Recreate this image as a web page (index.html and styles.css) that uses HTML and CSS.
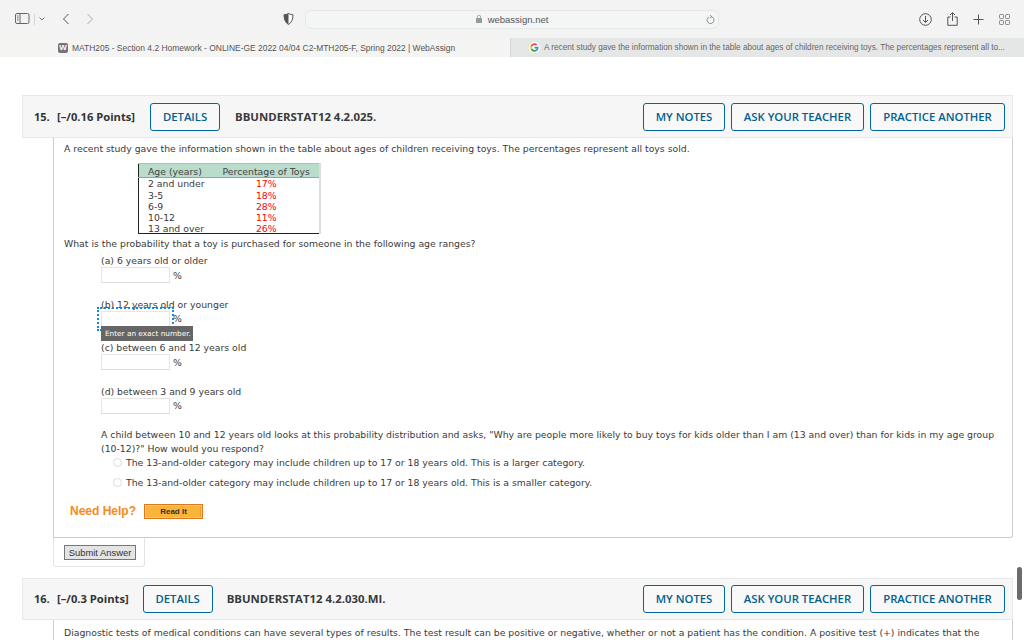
FILE: index.html
```html
<!DOCTYPE html>
<html lang="en">
<head>
<meta charset="utf-8">
<title>WebAssign</title>
<link rel="stylesheet" href="styles.css">
</head>
<body>
<div class="toolbar">
  <div class="tb-left">
    <svg class="ic-side" width="15" height="12" viewBox="0 0 15 12"><rect x=".5" y=".5" width="13.500" height="10" rx="1.500" fill="none" stroke="#666"/><path d="M5 .5v10M2 3h1.500M2 5h1.500M2 7h1.500" stroke="#666" fill="none"/></svg>
    <span class="tb-sep"></span>
    <svg class="ic-chev" width="6" height="4" viewBox="0 0 6 4"><path d="M.5.5 3 3 5.500.5" fill="none" stroke="#777"/></svg>
    <svg class="ic-back" width="8" height="12" viewBox="0 0 8 12"><path d="M6.500 1 1.500 6l5 5" fill="none" stroke="#555"/></svg>
    <svg class="ic-fwd" width="8" height="12" viewBox="0 0 8 12"><path d="M1.500 1l5 5-5 5" fill="none" stroke="#aaa"/></svg>
  </div>
  <svg class="ic-shield" width="11" height="12" viewBox="0 0 11 12"><path d="M5.500.5C7 1.300 8.500 1.700 10 1.800c0 4.500-1.500 8-4.500 9.700C2.500 9.800 1 6.300 1 1.800 2.500 1.700 4 1.300 5.500.5z" fill="#fff" stroke="#555"/><path d="M5.500.5C4 1.300 2.500 1.700 1 1.800c0 4.500 1.500 8 4.500 9.700z" fill="#555"/></svg>
  <div class="urlbar">
    <span class="url-mid">
      <svg width="6" height="8" viewBox="0 0 6 8"><rect y="3" width="6" height="5" rx=".8" fill="#999"/><path d="M1.300 3.500V2a1.700 1.700 0 0 1 3.400 0v1.500" fill="none" stroke="#999" stroke-width=".8"/></svg>
      <span>webassign.net</span>
    </span>
    <svg class="ic-reload" width="9" height="10" viewBox="0 0 9 10"><path d="M5.500 1.700a3.500 3.500 0 1 1-2.500.2" fill="none" stroke="#777" stroke-width=".8"/><path d="M3.800 0l2 1.700-2 1.300" fill="none" stroke="#777" stroke-width=".8"/></svg>
  </div>
  <div class="tb-right">
    <svg width="13" height="13" viewBox="0 0 13 13"><circle cx="6.500" cy="6.500" r="5.800" fill="none" stroke="#555"/><path d="M6.500 3v6.500M4 7l2.500 2.500L9 7" fill="none" stroke="#555"/></svg>
    <svg width="11" height="14" viewBox="0 0 11 14"><path d="M3.500 5H.8v8.300h9.400V5H7.500M5.500 9V.8M3 3l2.500-2.300L8 3" fill="none" stroke="#555"/></svg>
    <svg width="11" height="11" viewBox="0 0 11 11"><path d="M5.500.5v10M.5 5.500h10" stroke="#555" fill="none"/></svg>
    <svg width="11" height="11" viewBox="0 0 11 11"><g fill="none" stroke="#888"><rect x=".5" y=".5" width="4" height="4" rx=".8"/><rect x="6.500" y=".5" width="4" height="4" rx=".8"/><rect x=".5" y="6.500" width="4" height="4" rx=".8"/><rect x="6.500" y="6.500" width="4" height="4" rx=".8"/></g></svg>
  </div>
</div>
<div class="tabs">
  <div class="tab tab-a">
    <span class="fav-w">W</span>
    <span>MATH205 - Section 4.2 Homework - ONLINE-GE 2022 04/04 C2-MTH205-F, Spring 2022 | WebAssign</span>
  </div>
  <div class="tab tab-b">
    <svg class="fav-g" width="11" height="11" viewBox="-1 -1 11 11"><circle cx="4.500" cy="4.500" r="5.500" fill="#fff"/><path d="M8.600 4.600c0-.3 0-.6-.1-.9H4.500v1.700h2.300c-.1.600-.4 1-.9 1.300l1.400 1.100c.8-.8 1.300-1.900 1.300-3.200z" fill="#4285f4"/><path d="M4.500 8.800c1.200 0 2.100-.4 2.800-1.100L5.900 6.600c-.4.300-.8.400-1.400.4-1.100 0-2-.7-2.400-1.700L.7 6.400c.7 1.400 2.100 2.400 3.800 2.400z" fill="#34a853"/><path d="M2.100 5.300c-.2-.6-.2-1.100 0-1.600L.7 2.600c-.6 1.200-.6 2.600 0 3.800z" fill="#fbbc05"/><path d="M4.500 2c.6 0 1.200.2 1.600.6l1.200-1.200C6.600.7 5.600.3 4.500.3 2.800.3 1.400 1.300.7 2.600l1.400 1.100C2.500 2.700 3.400 2 4.500 2z" fill="#ea4335"/></svg>
    <span>A recent study gave the information shown in the table about ages of children receiving toys. The percentages represent all to...</span>
  </div>
</div>

<main class="page">
  <section class="q">
    <header class="q-head">
      <span class="q-num">15.</span>
      <span class="q-pts">[–/0.16 Points]</span>
      <a class="btn btn-first">DETAILS</a>
      <span class="q-code">BBUNDERSTAT12 4.2.025.</span>
      <span class="btns">
        <a class="btn btn-notes">MY NOTES</a>
        <a class="btn btn-ask">ASK YOUR TEACHER</a>
        <a class="btn btn-prac">PRACTICE ANOTHER</a>
      </span>
    </header>
    <div class="q-body">
      <p class="lead">A recent study gave the information shown in the table about ages of children receiving toys. The percentages represent all toys sold.</p>
      <table class="toys">
        <tr><th class="c1">Age (years)</th><th>Percentage of Toys</th></tr>
        <tr><td class="c1">2 and under</td><td class="pct">17%</td></tr>
        <tr><td class="c1">3-5</td><td class="pct">18%</td></tr>
        <tr><td class="c1">6-9</td><td class="pct">28%</td></tr>
        <tr><td class="c1">10-12</td><td class="pct">11%</td></tr>
        <tr class="clip"><td class="c1">13 and over</td><td class="pct">26%</td></tr>
      </table>
      <p class="ask">What is the probability that a toy is purchased for someone in the following age ranges?</p>
      <div class="parts">
        <div class="part"><div>(a) 6 years old or older</div><div class="ans"><span class="inp"></span><span>%</span></div></div>
        <div class="part"><div>(b) 12 years old or younger</div><div class="ans"><span class="inp focus"><span class="tip">Enter an exact number.</span></span><span>%</span></div></div>
        <div class="part"><div>(c) between 6 and 12 years old</div><div class="ans"><span class="inp"></span><span>%</span></div></div>
        <div class="part"><div>(d) between 3 and 9 years old</div><div class="ans"><span class="inp"></span><span>%</span></div></div>
      </div>
      <p class="child">A child between 10 and 12 years old looks at this probability distribution and asks, "Why are people more likely to buy toys for kids older than I am (13 and over) than for kids in my age group (10-12)?" How would you respond?</p>
      <div class="opt"><span class="radio"></span><span>The 13-and-older category may include children up to 17 or 18 years old. This is a larger category.</span></div>
      <div class="opt"><span class="radio"></span><span>The 13-and-older category may include children up to 17 or 18 years old. This is a smaller category.</span></div>
      <div class="help"><span class="help-t">Need Help?</span><span class="readit">Read It</span></div>
    </div>
    <div class="submit-tab"><span class="submit">Submit Answer</span></div>
  </section>

  <section class="q q2">
    <header class="q-head">
      <span class="q-num">16.</span>
      <span class="q-pts">[–/0.3 Points]</span>
      <a class="btn btn-first">DETAILS</a>
      <span class="q-code">BBUNDERSTAT12 4.2.030.MI.</span>
      <span class="btns">
        <a class="btn btn-notes">MY NOTES</a>
        <a class="btn btn-ask">ASK YOUR TEACHER</a>
        <a class="btn btn-prac">PRACTICE ANOTHER</a>
      </span>
    </header>
    <div class="q-body">
      <p class="lead">Diagnostic tests of medical conditions can have several types of results. The test result can be positive or negative, whether or not a patient has the condition. A positive test (+) indicates that the</p>
    </div>
  </section>
</main>
<div class="thumb"></div>
</body>
</html>
```

FILE: styles.css
```css
* { box-sizing: border-box; }
html, body { margin: 0; height: 640px; overflow: hidden; background: #fff; }
body { font-family: "DejaVu Sans", Verdana, sans-serif; font-size: 9.3px; color: #3a3a3a; position: relative; }
svg { display: block; flex: none; }

.toolbar { height: 38px; background: #f3f3f3; display: flex; align-items: center; position: relative; }
.tb-left { width: 280px; padding-left: 15px; display: flex; align-items: center; }
.tb-sep { width: 1px; height: 11px; background: #d5d5d5; margin-left: 4px; }
.ic-chev { margin-left: 4px; }
.ic-back { margin-left: 17px; }
.ic-fwd { margin-left: 16px; }
.ic-shield { margin-left: 3px; }
.urlbar { width: 414px; height: 19px; margin-left: 11px; border: 1px solid #e6e7e7; border-radius: 6px; background: #f4f5f5; display: flex; align-items: center; justify-content: center; position: relative; font-family: "Liberation Sans", Arial, sans-serif; font-size: 9.5px; color: #555; }
.url-mid { display: flex; align-items: center; gap: 6px; }
.ic-reload { position: absolute; right: 3px; top: 4px; }
.tb-right { display: flex; align-items: center; margin-left: auto; padding-right: 14px; gap: 15px; }

.tabs { height: 19px; display: flex; font-family: "Liberation Sans", Arial, sans-serif; color: #555; }
.tab { display: flex; align-items: center; white-space: nowrap; overflow: hidden; }
.tab-a { width: 511px; background: #f4f4f3; padding-left: 58px; gap: 4px; border-right: 1px solid #d8d8d8; font-size: 8.45px; }
.tab-b { flex: 1; background: #e5e6e6; padding-left: 18px; gap: 4px; color: #666; font-size: 8.2px; border-top: 1px solid #d6d6d6; margin-top: -1px; height: 20px; }
.fav-w { width: 10px; height: 10px; background: #77727e; border-radius: 2px; color: #fff; font-size: 8px; font-weight: bold; text-align: center; line-height: 10px; }

.page { padding: 38px 11px 0 22px; }
.q-head { height: 43px; background: #f6f6f6; border: 1px solid #e8e8e8; display: flex; align-items: center; padding: 0 7px 0 11px; font-family: "Open Sans", sans-serif; font-weight: 600; color: #333; }
.q-num { font-size: 11px; font-weight: 700; width: 23px; padding-bottom: 1px; }
.q-pts { font-size: 11.2px; font-weight: 700; padding-bottom: 1px; }
.q-code { font-size: 11.4px; font-weight: 700; margin-left: 15px; white-space: nowrap; color: #3a3a3a; padding-bottom: 1px; }
.btns { margin-left: auto; display: flex; gap: 6px; }
.btn { height: 28px; border: 1px solid #00679c; border-radius: 3px; color: #00608f; font-size: 11.3px; display: flex; align-items: center; justify-content: center; background: #f8f8f8; white-space: nowrap; padding-bottom: 1px; }
.btn-first { width: 70px; margin-left: 15px; }
.btn-notes { width: 82px; }
.btn-ask { width: 133px; }
.btn-prac { width: 135px; }

.q-body { margin-left: 31px; height: 400px; padding: 4px 0 0 10px; border: 1px solid #ccc; border-top: 0; border-radius: 0 0 3px 0; line-height: 11px; }
.q-body p { margin: 0; }
.lead { height: 21px; padding-top: 1px; }
.toys { border-collapse: collapse; margin-left: 74px; width: 183px; border: 1px solid #222; border-top-color: #bbb; border-right: 2px solid #ddd; line-height: 11.3px; }
.toys th { background: #b9dccb; font-weight: normal; padding: 2px 0 0; border-bottom: 1px solid #8aa; text-align: center; color: #444; }
.toys td { padding: 0; text-align: center; }
.toys .c1 { text-align: left; padding-left: 9px; width: 75px; }
.toys .clip td { line-height: 8px; padding-top: 1.6px; }
.pct { color: #f00; }
.ask { padding-top: 3.5px; height: 19px; }
.parts { margin-left: 37px; padding-top: 2px; }
.part { height: 43.5px; }
.part:last-child { height: 42px; }
.ans { display: flex; align-items: center; gap: 3px; height: 18px; }
.inp { width: 69px; height: 16px; border: 1px solid #e6e6e6; border-bottom-color: #ddd; position: relative; background: #fff; flex: none; }
.focus { outline: 2px dotted #1a86dc; outline-offset: 2px; }
.tip { position: absolute; left: -1px; top: 14px; width: 92px; height: 15px; background: #666; color: #fff; font-size: 7.3px; line-height: 15px; padding-left: 4px; white-space: nowrap; z-index: 1; }
.child { padding: 0 14px 0 37px; line-height: 14px; height: 25px; }
.opt { margin-left: 49px; display: flex; align-items: center; gap: 4px; height: 20px; }
.radio { width: 9px; height: 9px; border: 1px solid #ddd; border-radius: 50%; flex: none; }
.help { display: flex; align-items: center; margin-left: 6px; margin-top: 11px; gap: 8px; font-family: "Liberation Sans", Arial, sans-serif; height: 15px; }
.help-t { color: #f58a22; font-size: 12px; font-weight: bold; }
.readit { width: 59px; height: 15px; background: #fbb43a; border: 1px solid #e0761f; box-shadow: inset 0 0 0 1px #f9c877, inset -2px 0 0 #ef9a35; color: #333; font-size: 8px; font-weight: bold; text-align: center; line-height: 13px; }

.submit-tab { margin-left: 31px; width: 92px; height: 29px; border: 1px solid #e4e4e4; border-top: 0; border-radius: 0 0 3px 3px; padding: 7px 0 0 10px; }
.submit { display: block; width: 72px; height: 15px; border: 1px solid #777; background: #e4e4e4; color: #333; font-family: "Liberation Sans", Arial, sans-serif; font-size: 9.4px; line-height: 13px; text-align: center; }

.q2 { margin-top: 11px; }
.q2 .q-head { height: 42px; }
.q2 .btn-first { margin-left: 14px; }
.q2 .q-code { margin-left: 14px; }
.q2 .q-body { padding-top: 6px; }
.thumb { position: absolute; left: 1017px; top: 567px; width: 5px; height: 33px; border-radius: 3px; background: #6b6b6b; }
```
